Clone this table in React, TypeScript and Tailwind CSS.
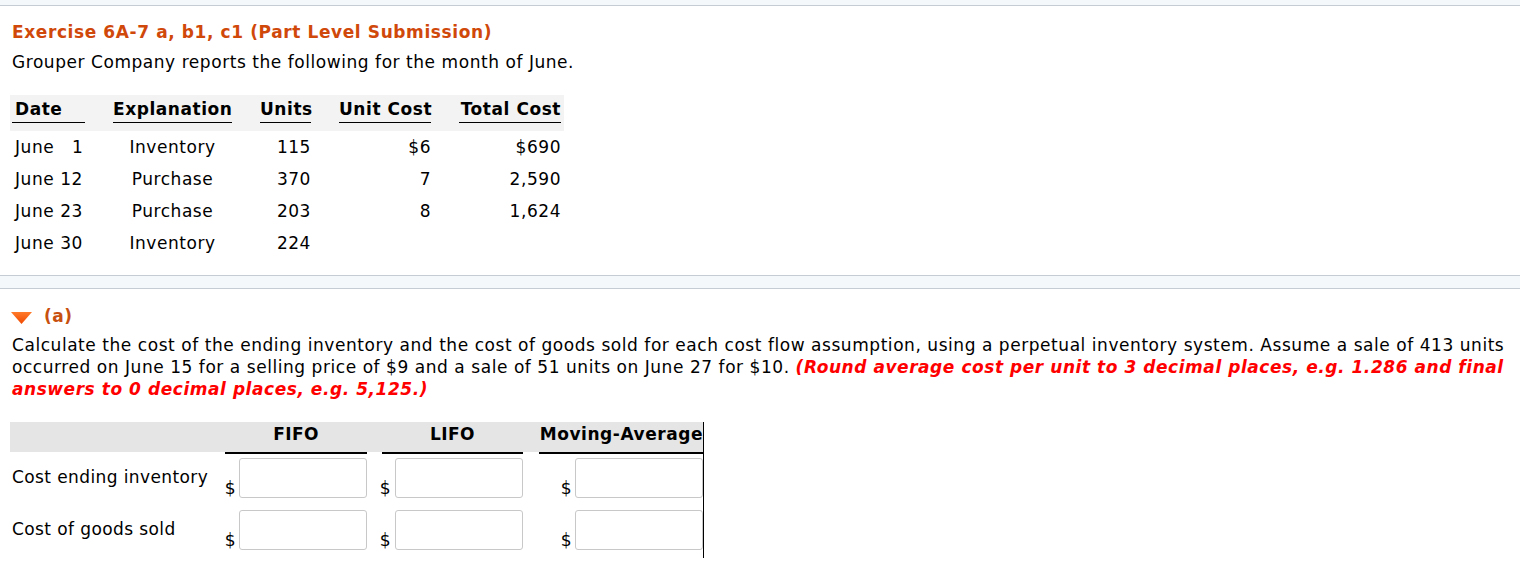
import React from "react";

const V = { fontFamily: '"DejaVu Sans", Verdana, sans-serif' };

function Cell({ width, gap }: { width: string; gap: string }) {
  return (
    <div className={`${width} shrink-0 flex items-end justify-end ${gap} pt-[4px] pb-[8px]`}>
      <span className="text-[17px] leading-[18px] mb-[1px] text-black">$</span>
      <div className="h-[40px] w-[128px] shrink-0 rounded-[3px] border border-[#c8c8c8] bg-white" />
    </div>
  );
}

export default function App() {
  const rows = [
    ["June\u00a0\u00a0\u00a01", "Inventory", "115", "$6", "$690"],
    ["June 12", "Purchase", "370", "7", "2,590"],
    ["June 23", "Purchase", "203", "8", "1,624"],
    ["June 30", "Inventory", "224", "", ""],
  ];
  return (
    <div className="w-[1520px] h-[561px] bg-white overflow-hidden text-black tracking-[0.55px]" style={V}>
      <div className="h-[6px] bg-[#f4f8fb] border-b border-[#c6ccd3]" />
      <div className="pl-[12px] pt-[14px]">
        <div className="text-[17px] font-bold leading-[24px] text-[#d0480a] tracking-[0.6px]">
          Exercise 6A-7 a, b1, c1 (Part Level Submission)
        </div>
        <div className="mt-[7px] text-[17px] leading-[22px]">
          Grouper Company reports the following for the month of June.
        </div>
      </div>
      <div className="ml-[10px] mt-[22px] w-[554px]">
        <div className="bg-[#f3f3f3] h-[36px] pl-[2px] pt-[3px] grid grid-cols-[73px_119px_51px_92px_102px] gap-x-[28px] text-[17px] font-bold leading-[22px]">
          <div className="border-b border-black pl-[3px] h-[25px] whitespace-nowrap">Date</div>
          <div className="border-b border-black text-center h-[25px] whitespace-nowrap">Explanation</div>
          <div className="border-b border-black text-right h-[25px] whitespace-nowrap">Units</div>
          <div className="border-b border-black text-right h-[25px] whitespace-nowrap">Unit Cost</div>
          <div className="border-b border-black text-right h-[25px] whitespace-nowrap">Total Cost</div>
        </div>
        <div className="pl-[2px]">
          {rows.map((r, i) => (
            <div
              key={i}
              className="grid grid-cols-[73px_119px_51px_92px_102px] gap-x-[28px] h-[32px] items-center text-[17px] leading-[22px]"
            >
              <div className="pl-[3px] whitespace-pre">{r[0]}</div>
              <div className="text-center">{r[1]}</div>
              <div className="text-right">{r[2]}</div>
              <div className="text-right">{r[3]}</div>
              <div className="text-right">{r[4]}</div>
            </div>
          ))}
        </div>
      </div>
      <div className="mt-[16px] h-[14px] border-y border-[#c6ccd3] bg-[#f4f8fb]" />
      <div className="pl-[11px] pt-[16px]">
        <div className="flex items-center h-[24px]">
          <svg width="21" height="12" viewBox="0 0 21 12" className="mr-[12px] mt-[1px]">
            <defs>
              <linearGradient id="tg" x1="0" y1="0" x2="0" y2="1">
                <stop offset="0" stopColor="#ff7a2a" />
                <stop offset="1" stopColor="#f04a00" />
              </linearGradient>
            </defs>
            <polygon points="0,0 21,0 10.5,12" fill="url(#tg)" />
          </svg>
          <span className="text-[17px] font-bold text-[#c8500f]">(a)</span>
        </div>
        <div className="mt-[5px] pl-[1px] text-[17px] leading-[22px] whitespace-nowrap">
          Calculate the cost of the ending inventory and the cost of goods sold for each cost flow assumption, using a perpetual inventory system. Assume a sale of 413 units
          <br />
          occurred on June 15 for a selling price of $9 and a sale of 51 units on June 27 for $10.{" "}
          <span className="font-bold italic text-[#ff0000]">(Round average cost per unit to 3 decimal places, e.g. 1.286 and final</span>
          <br />
          <span className="font-bold italic text-[#ff0000]">answers to 0 decimal places, e.g. 5,125.)</span>
        </div>
      </div>
      <div className="ml-[10px] mt-[22px] w-[694px] border-r border-black tracking-[0.4px]">
        <div className="flex h-[30px] bg-[#e5e5e5] text-[17px] font-bold leading-[24px]">
          <div className="w-[215px] shrink-0" />
          <div className="w-[142px] shrink-0 text-center">FIFO</div>
          <div className="w-[15px] shrink-0" />
          <div className="w-[141px] shrink-0 text-center">LIFO</div>
          <div className="w-[16px] shrink-0" />
          <div className="w-[164px] shrink-0 text-right whitespace-nowrap tracking-[0.55px]">Moving-Average</div>
        </div>
        <div className="flex h-[2px]">
          <div className="w-[215px] shrink-0" />
          <div className="w-[142px] shrink-0 bg-black" />
          <div className="w-[15px] shrink-0" />
          <div className="w-[141px] shrink-0 bg-black" />
          <div className="w-[16px] shrink-0" />
          <div className="w-[164px] shrink-0 bg-black" />
        </div>
        {["Cost ending inventory", "Cost of goods sold"].map((label) => (
          <div key={label} className="flex h-[52px] text-[17px]">
            <div className="w-[214px] shrink-0 pl-[2px] pt-[12px] leading-[22px] whitespace-nowrap">{label}</div>
            <Cell width="w-[143px]" gap="gap-[3px]" />
            <div className="w-[15px] shrink-0" />
            <Cell width="w-[141px]" gap="gap-[4px]" />
            <div className="w-[16px] shrink-0" />
            <Cell width="w-[164px]" gap="gap-[3px]" />
          </div>
        ))}
      </div>
    </div>
  );
}
